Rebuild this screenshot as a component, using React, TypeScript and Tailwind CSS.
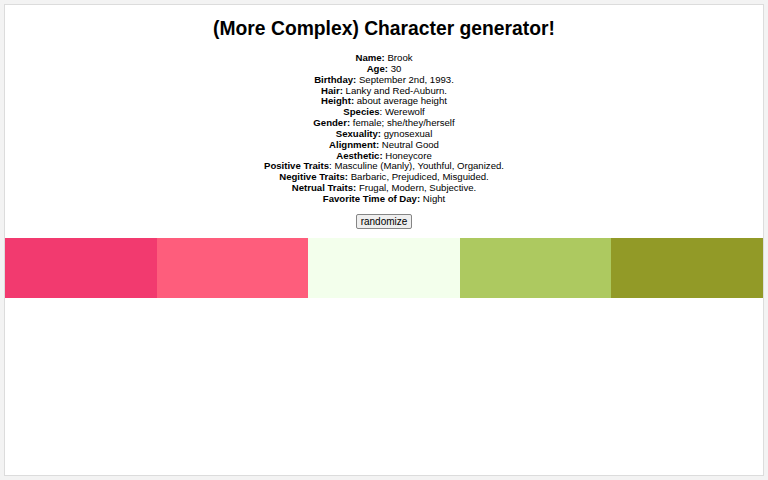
const info: [string, string][] = [
  ["Name:", "Brook"],
  ["Age:", "30"],
  ["Birthday:", "September 2nd, 1993."],
  ["Hair:", "Lanky and Red-Auburn."],
  ["Height:", "about average height"],
  ["Species", ": Werewolf"],
  ["Gender:", "female; she/they/herself"],
  ["Sexuality:", "gynosexual"],
  ["Alignment:", "Neutral Good"],
  ["Aesthetic:", "Honeycore"],
  ["Positive Traits", ": Masculine (Manly), Youthful, Organized."],
  ["Negitive Traits:", "Barbaric, Prejudiced, Misguided."],
  ["Netrual Traits:", "Frugal, Modern, Subjective."],
  ["Favorite Time of Day:", "Night"],
];

const palette = ["#f23a6f", "#fe5d7c", "#f3ffec", "#adc960", "#929a27"];

export default function App() {
  return (
    <div className="h-screen bg-[#f3f3f3] p-1 font-['Liberation_Sans',Arial,sans-serif] text-black">
      <div className="h-full border border-[#dcdcdc] bg-white">
        <h1 className="pt-[12px] text-center text-[19.3px] font-bold leading-[23px]">
          (More Complex) Character generator!
        </h1>
        <div className="mt-[13px] text-center text-[9.6px] leading-[10.85px]">
          {info.map(([label, value]) => (
            <div key={label}>
              <b>{label}</b>
              {value.startsWith(":") ? value : " " + value}
            </div>
          ))}
        </div>
        <div className="mt-[9px] flex justify-center">
          <button className="h-[15px] rounded-[2px] border border-[#858585] bg-[#efefef] px-[4px] text-[10px] leading-[13px]">
            randomize
          </button>
        </div>
        <div className="mt-[9px] flex h-[60px]">
          {palette.map((c) => (
            <div key={c} className="flex-1" style={{ backgroundColor: c }} />
          ))}
        </div>
      </div>
    </div>
  );
}
